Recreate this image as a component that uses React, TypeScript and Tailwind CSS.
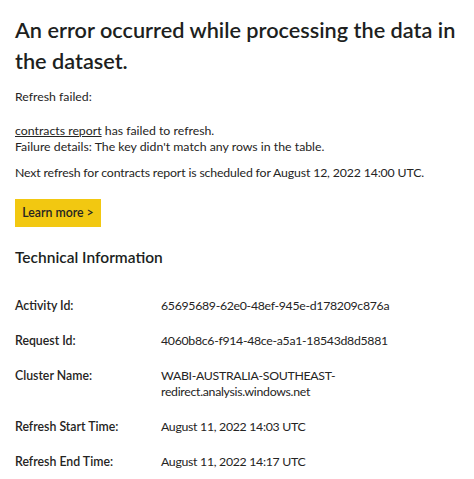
const rows: { label: string; value: string[] }[] = [
  { label: "Activity Id:", value: ["65695689-62e0-48ef-945e-d178209c876a"] },
  { label: "Request Id:", value: ["4060b8c6-f914-48ce-a5a1-18543d8d5881"] },
  { label: "Cluster Name:", value: ["WABI-AUSTRALIA-SOUTHEAST-", "redirect.analysis.windows.net"] },
  { label: "Refresh Start Time:", value: ["August 11, 2022 14:03 UTC"] },
  { label: "Refresh End Time:", value: ["August 11, 2022 14:17 UTC"] },
];

export default function App() {
  return (
    <main className="min-h-screen bg-white px-[15px] pt-[15px] font-['Lato',sans-serif] text-[12.3px] text-[#252423]">
      <h1 className="text-[21.7px] font-semibold leading-[31px] text-[#201f1e]">
        An error occurred while processing the data in the dataset.
      </h1>

      <p className="mt-[12px] leading-[16px]">Refresh failed:</p>

      <div className="mt-[18px] leading-[16px]">
        <p>
          <span className="underline">contracts report</span> has failed to refresh.
        </p>
        <p>Failure details: The key didn't match any rows in the table.</p>
      </div>

      <p className="mt-[10px] leading-[16px] tracking-[-0.15px]">
        Next refresh for contracts report is scheduled for August 12, 2022 14:00 UTC.
      </p>

      <button
        type="button"
        className="mt-[18px] h-[28px] w-[86px] bg-[#f2c811] text-[12.3px] font-semibold text-[#252423]"
      >
        Learn more &gt;
      </button>

      <h2 className="mt-[19px] text-[15.5px] font-semibold leading-[22px] text-[#201f1e]">Technical Information</h2>

      <dl className="mt-[30px] flex flex-col gap-[19px]">
        {rows.map((row) => (
          <div key={row.label} className="flex leading-[16px]">
            <dt className="w-[146px] shrink-0 font-semibold">{row.label}</dt>
            <dd className="tracking-[-0.3px]">
              {row.value.map((line) => (
                <div key={line}>{line}</div>
              ))}
            </dd>
          </div>
        ))}
      </dl>
    </main>
  );
}
